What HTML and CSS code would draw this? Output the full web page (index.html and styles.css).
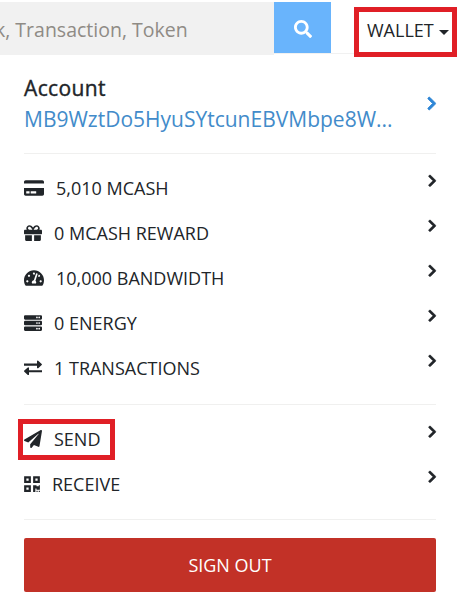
FILE: index.html
```html
<!DOCTYPE html>
<html lang="en">
<head>
  <meta charset="UTF-8">
  <title>Wallet</title>
  <meta name="viewport" content="width=device-width, initial-scale=1.0">
  <link rel="stylesheet" href="styles.css">
</head>
<body>
  <svg class="sprite" width="0" height="0">
    <symbol id="chevron" viewBox="0 0 320 512">
      <path d="M285.476 272.971L91.132 467.314c-9.373 9.373-24.569 9.373-33.941 0l-22.667-22.667c-9.357-9.357-9.375-24.522-.04-33.901L188.505 256 34.484 101.255c-9.335-9.379-9.317-24.544.04-33.901l22.667-22.667c9.373-9.373 24.569-9.373 33.941 0L285.475 239.03c9.373 9.372 9.373 24.568.001 33.941z"/>
    </symbol>
  </svg>

  <header class="topbar">
    <div class="search-field"><span>k, Transaction, Token</span></div>
    <button class="search-btn" aria-label="Search">
      <svg viewBox="0 0 512 512"><path d="M505 442.7L405.3 343c-4.5-4.5-10.6-7-17-7H372c27.6-35.3 44-79.7 44-128C416 93.1 322.9 0 208 0S0 93.1 0 208s93.1 208 208 208c48.3 0 92.7-16.4 128-44v16.3c0 6.4 2.5 12.5 7 17l99.7 99.7c9.4 9.4 24.6 9.4 33.9 0l28.3-28.3c9.4-9.4 9.4-24.6.1-34zM208 336c-70.7 0-128-57.2-128-128 0-70.7 57.2-128 128-128 70.7 0 128 57.2 128 128 0 70.7-57.2 128-128 128z"/></svg>
    </button>
    <a class="wallet-toggle"><span>WALLET</span><i class="caret"></i></a>
  </header>

  <main class="menu">
    <a class="account">
      <div>
        <div class="account-title">Account</div>
        <div class="account-address">MB9WztDo5HyuSYtcunEBVMbpe8W...</div>
      </div>
      <svg class="chevron chevron-blue"><use href="#chevron"/></svg>
    </a>

    <ul class="list">
      <li>
        <svg class="icon icon-wide" viewBox="0 0 576 512"><path d="M0 432c0 26.5 21.5 48 48 48h480c26.5 0 48-21.5 48-48V256H0v176zm192-68c0-6.6 5.4-12 12-12h136c6.6 0 12 5.4 12 12v40c0 6.6-5.4 12-12 12H204c-6.6 0-12-5.4-12-12v-40zm-128 0c0-6.6 5.4-12 12-12h72c6.6 0 12 5.4 12 12v40c0 6.6-5.4 12-12 12H76c-6.6 0-12-5.4-12-12v-40zM576 80v48H0V80c0-26.5 21.5-48 48-48h480c26.5 0 48 21.5 48 48z"/></svg>
        <span class="label">5,010 MCASH</span>
        <svg class="chevron"><use href="#chevron"/></svg>
      </li>
      <li>
        <svg class="icon" viewBox="0 0 512 512"><path d="M32 448c0 17.7 14.3 32 32 32h160V320H32v128zm256 32h160c17.7 0 32-14.3 32-32V320H288v160zm192-320h-42.1c6.2-12.1 10.1-25.5 10.1-40 0-48.5-39.5-88-88-88-41.6 0-68.5 21.3-103 68.3-34.5-47-61.4-68.3-103-68.3-48.5 0-88 39.5-88 88 0 14.5 3.8 27.9 10.1 40H32c-17.7 0-32 14.3-32 32v80c0 8.8 7.2 16 16 16h480c8.8 0 16-7.2 16-16v-80c0-17.7-14.3-32-32-32zm-326.1 0c-22.1 0-40-17.9-40-40s17.9-40 40-40c19.9 0 34.6 3.3 86.1 80h-86.1zm206.1 0h-86.1c51.4-76.5 65.7-80 86.1-80 22.1 0 40 17.9 40 40s-17.9 40-40 40z"/></svg>
        <span class="label">0 MCASH REWARD</span>
        <svg class="chevron"><use href="#chevron"/></svg>
      </li>
      <li>
        <svg class="icon icon-wide" viewBox="0 0 576 512"><path d="M288 32C128.94 32 0 160.94 0 320c0 52.8 14.25 102.26 39.06 144.8 5.61 9.62 16.3 15.2 27.44 15.2h443c11.14 0 21.83-5.58 27.44-15.2C561.75 422.26 576 372.8 576 320c0-159.06-128.94-288-288-288zm0 64c14.71 0 26.58 10.13 30.32 23.65-1.11 2.26-2.64 4.23-3.45 6.67l-9.22 27.67c-5.13 3.49-10.97 6.01-17.64 6.01-17.67 0-32-14.33-32-32S270.33 96 288 96zM96 384c-17.67 0-32-14.33-32-32s14.33-32 32-32 32 14.33 32 32-14.33 32-32 32zm48-160c-17.67 0-32-14.33-32-32s14.33-32 32-32 32 14.33 32 32-14.33 32-32 32zm246.77-72.41l-61.33 184C343.13 347.33 352 364.54 352 384c0 11.72-3.38 22.55-8.88 32H232.88c-5.5-9.45-8.88-20.28-8.88-32 0-33.94 26.5-61.43 59.9-63.59l61.34-184.01c4.17-12.56 17.73-19.45 30.36-15.17 12.57 4.19 19.35 17.79 15.17 30.36zm14.66 57.2l15.52-46.55c3.47-1.29 7.13-2.23 11.05-2.23 17.67 0 32 14.33 32 32s-14.33 32-32 32c-11.38-.01-20.89-6.28-26.57-15.22zM480 384c-17.67 0-32-14.33-32-32s14.33-32 32-32 32 14.33 32 32-14.33 32-32 32z"/></svg>
        <span class="label">10,000 BANDWIDTH</span>
        <svg class="chevron"><use href="#chevron"/></svg>
      </li>
      <li>
        <svg class="icon" viewBox="0 0 512 512"><path fill-rule="evenodd" d="M32 32h448q32 0 32 32v64q0 32-32 32H32q-32 0-32-32V64q0-32 32-32zM344 96a24 24 0 1 0 48 0a24 24 0 1 0-48 0zM408 96a24 24 0 1 0 48 0a24 24 0 1 0-48 0zM32 192h448q32 0 32 32v64q0 32-32 32H32q-32 0-32-32v-64q0-32 32-32zM344 256a24 24 0 1 0 48 0a24 24 0 1 0-48 0zM408 256a24 24 0 1 0 48 0a24 24 0 1 0-48 0zM32 352h448q32 0 32 32v64q0 32-32 32H32q-32 0-32-32v-64q0-32 32-32zM344 416a24 24 0 1 0 48 0a24 24 0 1 0-48 0zM408 416a24 24 0 1 0 48 0a24 24 0 1 0-48 0z"/></svg>
        <span class="label">0 ENERGY</span>
        <svg class="chevron"><use href="#chevron"/></svg>
      </li>
      <li>
        <svg class="icon" viewBox="0 0 18 18"><path d="M0 4.6h13V2.2q.2-1.1 1.2-.5l3.5 3.2q.5.6 0 1.2l-3.5 3.1q-1 .5-1.2-.5V6.7H0zM18 11.2H5V8.9q-.2-1.1-1.2-.5L.3 11.6q-.5.6 0 1.2l3.5 3.1q1 .5 1.2-.5v-2.1H18z"/></svg>
        <span class="label">1 TRANSACTIONS</span>
        <svg class="chevron"><use href="#chevron"/></svg>
      </li>
    </ul>

    <ul class="list list-actions">
      <li class="marked">
        <svg class="icon" viewBox="0 0 512 512"><path d="M476 3.2L12.5 270.6c-18.1 10.4-15.8 35.6 2.2 43.2L121 358.4l287.3-253.2c5.5-4.9 13.3 2.6 8.6 8.3L176 407v80.5c0 23.6 28.5 32.9 42.5 15.8L282 426l124.6 52.2c14.2 6 30.4-2.9 33-18.2l72-432C515 7.8 493.3-6.8 476 3.2z"/></svg>
        <span class="label">SEND</span>
        <svg class="chevron"><use href="#chevron"/></svg>
      </li>
      <li>
        <svg class="icon icon-narrow" viewBox="0 0 448 512"><path d="M0 224h192V32H0v192zM64 96h64v64H64V96zm192-64v192h192V32H256zm128 128h-64V96h64v64zM0 480h192V288H0v192zm64-128h64v64H64v-64zm352-64h32v128h-96v-32h-32v96h-64V288h96v32h64v-32zm0 160h32v32h-32v-32zm-64 0h32v32h-32v-32z"/></svg>
        <span class="label">RECEIVE</span>
        <svg class="chevron"><use href="#chevron"/></svg>
      </li>
    </ul>

    <button class="sign-out">SIGN OUT</button>
  </main>
</body>
</html>
```
FILE: styles.css
```css
* {
  box-sizing: border-box;
}

body {
  margin: 0;
  background-color: #fff;
  color: #212529;
  font-family: "Open Sans", sans-serif;
  font-size: 18px;
  overflow: hidden;
}

svg {
  display: block;
  flex: none;
  fill: currentColor;
}

.sprite {
  position: absolute;
}

.topbar {
  display: flex;
  align-items: flex-start;
  height: 54px;
  padding-top: 2px;
  background: linear-gradient(#f1f1f1, #f1f1f1) left bottom / 354px 1px no-repeat;
}

.search-field {
  display: flex;
  align-items: center;
  width: 274px;
  height: 53px;
  padding-top: 1px;
  background-color: #f1f1f1;
  color: #8f8b85;
  font-size: 19.5px;
  white-space: nowrap;
}

.search-field span {
  margin-left: -5px;
}

.search-btn {
  display: flex;
  align-items: center;
  justify-content: center;
  width: 57px;
  height: 51px;
  padding: 2px 0 0;
  border: none;
  background-color: #69b4fc;
  color: #fff;
}

.search-btn svg {
  width: 18px;
  height: 18px;
}

.wallet-toggle {
  display: flex;
  align-items: center;
  flex: none;
  width: 103px;
  height: 50px;
  margin: 5px 0 0 23px;
  padding: 0 0 4px 8px;
  border: 5px solid #e01f26;
  background-color: #fff;
}

.caret {
  margin: 5px 0 0 5px;
  border: 5px solid transparent;
  border-top-color: #212529;
  border-bottom: none;
}

.menu {
  padding: 0 23px 0 24px;
}

.account {
  display: flex;
  align-items: center;
  justify-content: space-between;
  height: 100px;
  border-bottom: 1px solid #f0f0ef;
}

.account-title {
  font-size: 21px;
  line-height: 31px;
  letter-spacing: 0.35px;
  -webkit-text-stroke: 0.4px currentColor;
}

.account-address {
  color: #428bca;
  font-size: 21px;
  line-height: 31px;
}

.chevron {
  width: 8.5px;
  height: 13.5px;
  margin: -13px 0 0 auto;
  overflow: visible;
  stroke: currentColor;
  stroke-width: 30;
}

.chevron-blue {
  width: 9.5px;
  height: 15px;
  margin: 0;
  color: #2f86d6;
}

.list {
  margin: 0;
  padding: 11px 0 14px;
  border-bottom: 1px solid #f0f0ef;
  list-style: none;
}

.list-actions {
  padding: 11px 0 13px;
}

.list li {
  display: flex;
  align-items: center;
  position: relative;
  height: 45px;
}

.icon {
  width: 18px;
  height: 18px;
}

.icon-wide {
  width: 20px;
}

.icon-narrow {
  width: 16px;
}

.label {
  margin-left: 12px;
}

/* red frame around the highlighted entry */
.marked::after {
  content: "";
  box-sizing: border-box;
  position: absolute;
  top: 3px;
  left: -6px;
  width: 97px;
  height: 41px;
  border: 5px solid #e01f26;
}

.sign-out {
  display: block;
  width: 100%;
  height: 54px;
  margin-top: 18px;
  border: none;
  border-radius: 2px;
  background-color: #c23127;
  color: #fff;
  font-family: inherit;
  font-size: 18px;
}
```
